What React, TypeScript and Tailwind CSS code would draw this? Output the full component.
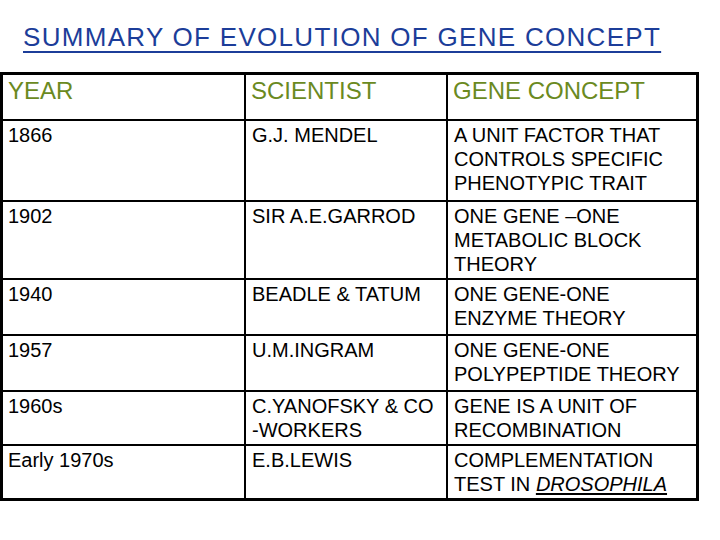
const rows: { year: string; who: React.ReactNode; idea: React.ReactNode; h: string }[] = [
  {
    year: "1866",
    who: "G.J. MENDEL",
    idea: (
      <>
        A UNIT FACTOR THAT
        <br />
        CONTROLS SPECIFIC
        <br />
        PHENOTYPIC TRAIT
      </>
    ),
    h: "h-[81px]",
  },
  {
    year: "1902",
    who: "SIR A.E.GARROD",
    idea: (
      <>
        ONE GENE –ONE
        <br />
        METABOLIC BLOCK
        <br />
        THEORY
      </>
    ),
    h: "h-[78px]",
  },
  {
    year: "1940",
    who: "BEADLE & TATUM",
    idea: (
      <>
        ONE GENE-ONE
        <br />
        ENZYME THEORY
      </>
    ),
    h: "h-[56px]",
  },
  {
    year: "1957",
    who: "U.M.INGRAM",
    idea: (
      <>
        ONE GENE-ONE
        <br />
        POLYPEPTIDE THEORY
      </>
    ),
    h: "h-[56px]",
  },
  {
    year: "1960s",
    who: (
      <>
        C.YANOFSKY &amp; CO
        <br />
        -WORKERS
      </>
    ),
    idea: (
      <>
        GENE IS A UNIT OF
        <br />
        RECOMBINATION
      </>
    ),
    h: "h-[54px]",
  },
  {
    year: "Early 1970s",
    who: "E.B.LEWIS",
    idea: (
      <>
        COMPLEMENTATION
        <br />
        TEST IN <span className="italic underline underline-offset-2">DROSOPHILA</span>
      </>
    ),
    h: "h-[54px]",
  },
];

export default function App() {
  return (
    <div className="h-[540px] w-[720px] bg-white font-['Liberation_Sans',Arial,sans-serif] text-black">
      <div className="pl-[23px] pt-[22px]">
        <h1 className="text-[26px] leading-[31px] tracking-[1.3px] text-[#1c3d99] underline decoration-2 underline-offset-[5px]">
          SUMMARY OF EVOLUTION OF GENE CONCEPT
        </h1>
      </div>
      <div className="mt-[19px] w-[699px] border-[3px] border-black">
        <div className="flex h-[44px] text-[24px] leading-[28px] text-[#6b8a1f]">
          <div className="w-[241px] pl-[5px] pt-[2px]">YEAR</div>
          <div className="w-[202px] border-l-2 border-black pl-[5px] pt-[2px]">SCIENTIST</div>
          <div className="flex-1 border-l-2 border-black pl-[5px] pt-[2px]">GENE CONCEPT</div>
        </div>
        {rows.map((r) => (
          <div key={r.year} className={`flex border-t-2 border-black text-[20px] leading-[24px] ${r.h}`}>
            <div className="w-[241px] pl-[5px] pt-[2px]">{r.year}</div>
            <div className="w-[202px] border-l-2 border-black pl-[6px] pt-[2px]">{r.who}</div>
            <div className="flex-1 border-l-2 border-black pl-[6px] pt-[2px]">{r.idea}</div>
          </div>
        ))}
      </div>
    </div>
  );
}
